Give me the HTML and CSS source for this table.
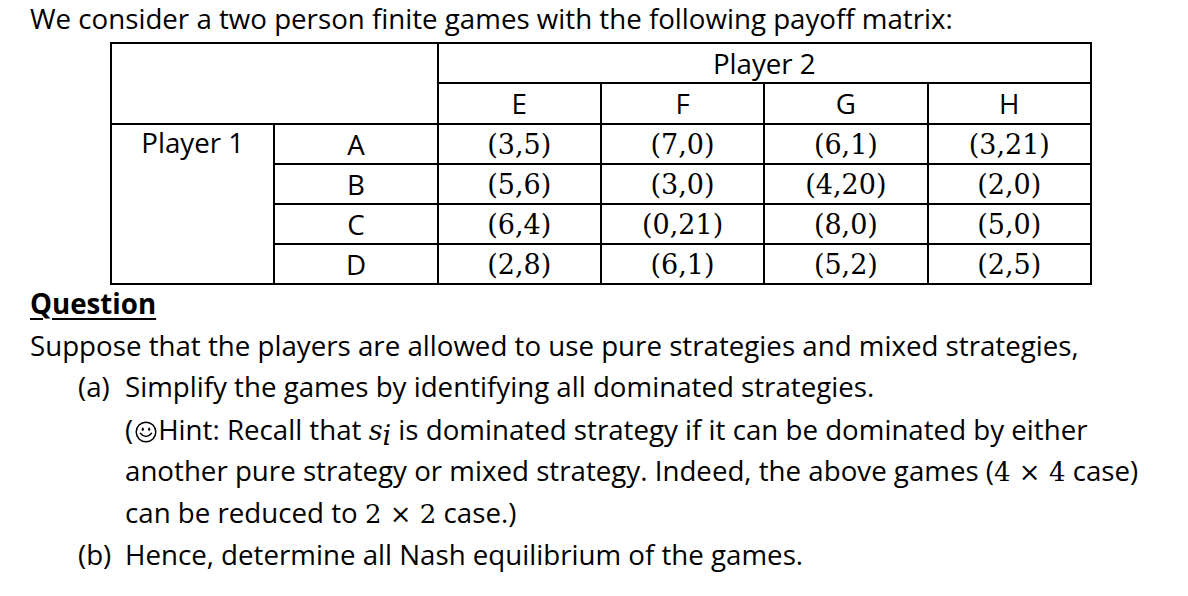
FILE: index.html
```html
<!DOCTYPE html>
<html lang="en">
<head>
<meta charset="utf-8">
<title>Payoff matrix question</title>
<link rel="stylesheet" href="styles.css">
</head>
<body>
<main class="page">
  <p class="intro">We consider a two person finite games with the following payoff matrix:</p>
  <table class="payoff">
    <colgroup>
      <col class="c"><col class="c"><col class="c"><col class="c"><col class="c"><col class="c">
    </colgroup>
    <tr class="r-top">
      <td colspan="2" rowspan="2"></td>
      <td colspan="4" class="txt">Player 2</td>
    </tr>
    <tr class="r-head">
      <td class="txt">E</td><td class="txt">F</td><td class="txt">G</td><td class="txt">H</td>
    </tr>
    <tr>
      <td rowspan="4" class="txt player1">Player 1</td>
      <td class="txt">A</td>
      <td class="m">(3,5)</td><td class="m">(7,0)</td><td class="m">(6,1)</td><td class="m">(3,21)</td>
    </tr>
    <tr>
      <td class="txt">B</td>
      <td class="m">(5,6)</td><td class="m">(3,0)</td><td class="m">(4,20)</td><td class="m">(2,0)</td>
    </tr>
    <tr>
      <td class="txt">C</td>
      <td class="m">(6,4)</td><td class="m">(0,21)</td><td class="m">(8,0)</td><td class="m">(5,0)</td>
    </tr>
    <tr>
      <td class="txt">D</td>
      <td class="m">(2,8)</td><td class="m">(6,1)</td><td class="m">(5,2)</td><td class="m">(2,5)</td>
    </tr>
  </table>

  <section class="question">
    <h2 class="q-title">Question</h2>
    <p class="lead">Suppose that the players are allowed to use pure strategies and mixed strategies,</p>
    <ol class="parts">
      <li class="part">
        <span class="label">(a)</span>
        <div class="part-body">
          <p>Simplify the games by identifying all dominated strategies.</p>
          <p class="hint">(<svg class="smiley" viewBox="0 0 22 22" width="22" height="22" aria-hidden="true"><circle cx="11" cy="11" r="9.8" fill="none" stroke="#000" stroke-width="1.5"/><ellipse cx="7.8" cy="8.2" rx="1.1" ry="1.8" fill="#000"/><ellipse cx="14.2" cy="8.2" rx="1.1" ry="1.8" fill="#000"/><path d="M5.4 12.2 Q11 18.8 16.6 12.2" fill="none" stroke="#000" stroke-width="1.5" stroke-linecap="round"/></svg>Hint: Recall that <span class="math"><i>s</i><sub><i>i</i></sub></span> is dominated strategy if it can be dominated by either<br>another pure strategy or mixed strategy. Indeed, the above games (<span class="math num">4 × 4</span> case)<br>can be reduced to <span class="math num">2 × 2</span> case.)</p>
        </div>
      </li>
      <li class="part">
        <span class="label">(b)</span>
        <div class="part-body">
          <p>Hence, determine all Nash equilibrium of the games.</p>
        </div>
      </li>
    </ol>
  </section>
</main>
</body>
</html>
```

FILE: styles.css
```css
html, body {
  margin: 0;
  padding: 0;
  background: #fff;
}

body {
  font-family: "Open Sans", "Lato", sans-serif;
  font-size: 27.7px;
  color: #000;
}

.page {
  padding: 0 0 0 30px;
}

.intro {
  box-sizing: border-box;
  margin: 0;
  padding-top: 2px;
  line-height: 32px;
  height: 42px;
}

.payoff {
  margin-left: 80px;
  border-collapse: collapse;
  table-layout: fixed;
  width: 982px;
  border: 2px solid #000;
}

.payoff col.c {
  width: 163.3px;
}

.payoff td {
  border: 2px solid #000;
  padding: 0;
  height: 38px;
  text-align: center;
  vertical-align: middle;
  line-height: 1;
}

.payoff td.txt {
  height: 37px;
  padding-top: 1px;
}

.payoff tr.r-head td.txt {
  height: 38px;
}

.payoff td.player1 {
  vertical-align: top;
  padding-top: 4px;
}

.payoff td.m {
  font-family: "DejaVu Serif", "Liberation Serif", serif;
  font-size: 27px;
}

.question {
  line-height: 41.5px;
}

.q-title {
  margin: -2px 0 0;
  font-size: inherit;
  font-weight: 700;
  text-decoration: underline;
  text-decoration-thickness: 2px;
  text-underline-offset: 4px;
  line-height: 41.5px;
}

.lead {
  margin: 0;
}

.parts {
  list-style: none;
  margin: 0;
  padding: 0 0 0 48px;
}

.part {
  display: flex;
}

.label {
  flex: 0 0 47px;
}

.part-body p {
  margin: 0;
}

.part-body p.hint {
  padding-top: 1px;
  line-height: 41.8px;
}

.smiley {
  vertical-align: -3px;
  margin: 0 1px 0 2px;
}

.math {
  font-family: "DejaVu Serif", "Liberation Serif", serif;
  line-height: 1;
}

.math i {
  font-size: 27px;
}

.math sub {
  font-size: 18px;
  vertical-align: -5px;
  line-height: 0;
}

.math.num {
  font-size: 26px;
}
```
